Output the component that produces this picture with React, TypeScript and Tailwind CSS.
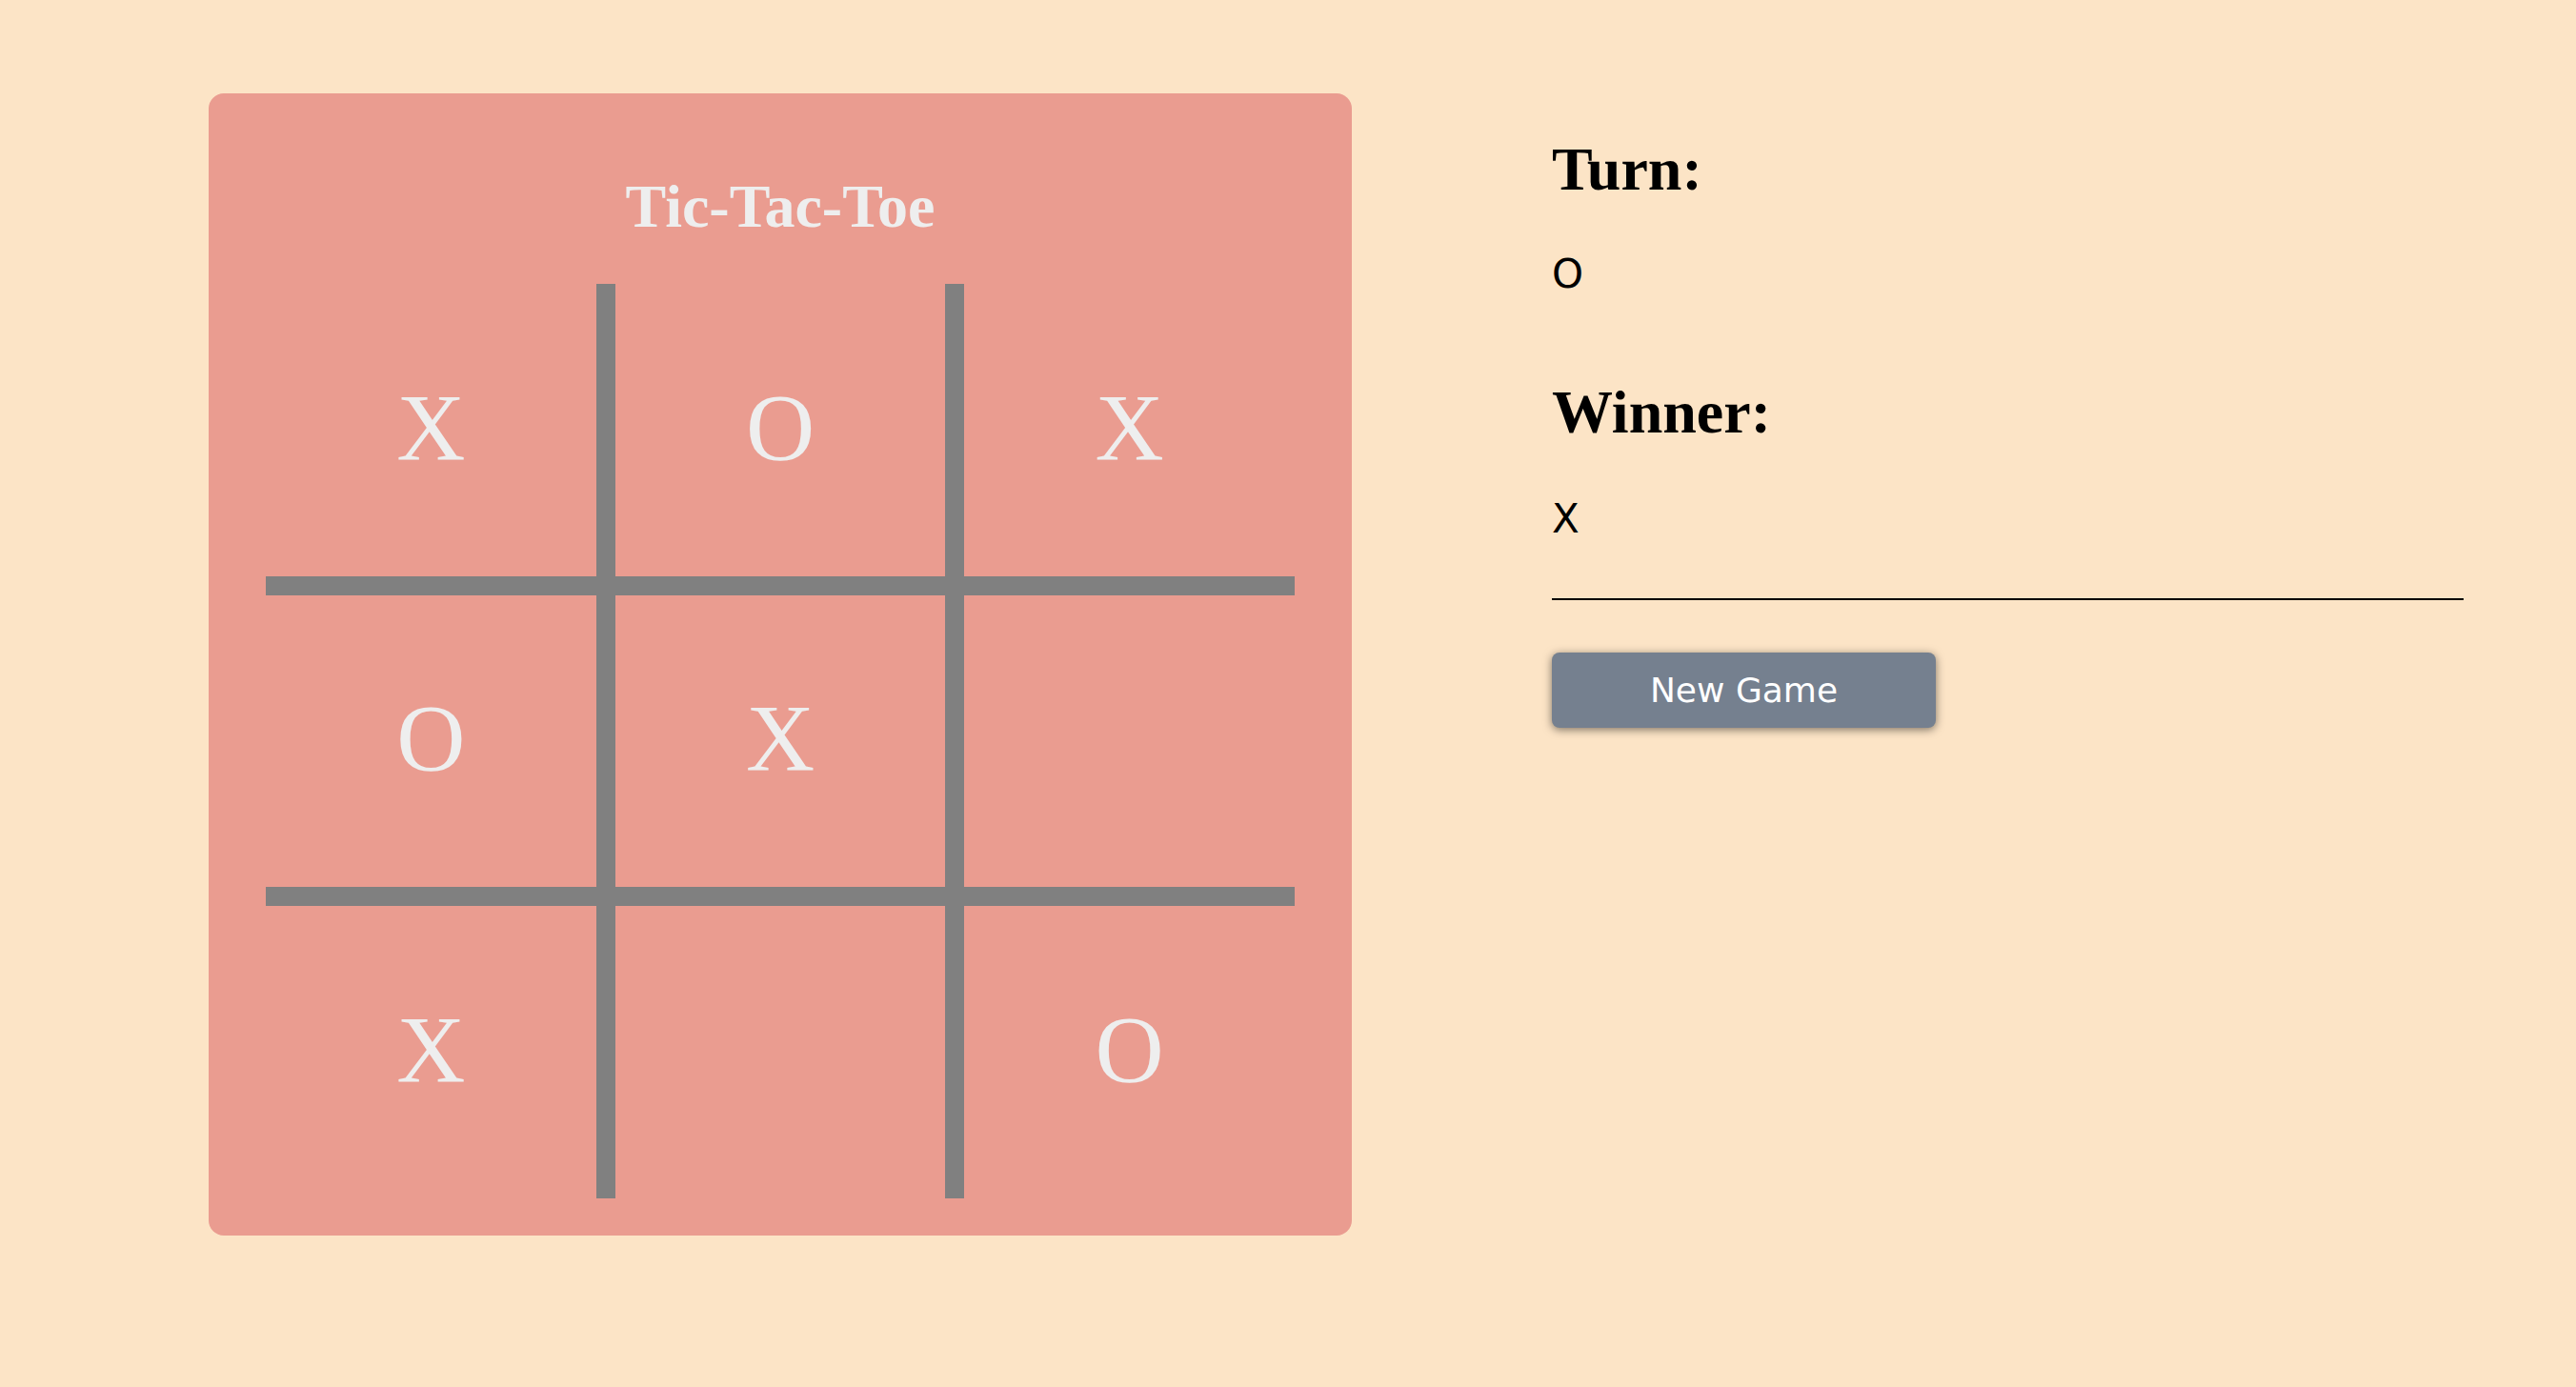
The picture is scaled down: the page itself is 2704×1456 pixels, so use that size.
import React from 'react';

type Mark = 'X' | 'O' | '';

const board: Mark[] = ['X', 'O', 'X', 'O', 'X', '', 'X', '', 'O'];

const Cell: React.FC<{ value: Mark }> = ({ value }) => (
  <div className="bg-[#ea9c90] flex items-center justify-center pb-[5px]">
    <span className="font-['Liberation_Serif',serif] text-[100px] leading-none text-[#eeeeee]">
      {value}
    </span>
  </div>
);

const App: React.FC = () => {
  return (
    <div className="min-h-screen w-full bg-[#fce4c6] flex items-start pt-[98px] pl-[219px]">
      <div className="w-[1200px] h-[1199px] shrink-0 rounded-[16px] bg-[#ea9c90] px-[60px] pt-[87px] flex flex-col">
        <h1 className="text-center font-['Liberation_Serif',serif] font-bold text-[64px] leading-[64px] text-[#eeeeee] mb-[49px]">
          Tic-Tac-Toe
        </h1>
        <div className="grid grid-cols-3 grid-rows-3 gap-[20px] bg-[#808080] w-[1080px] h-[960px]">
          {board.map((value, i) => (
            <Cell key={i} value={value} />
          ))}
        </div>
      </div>

      <div className="ml-[210px] w-[957px] pt-[48px] flex flex-col">
        <h2 className="font-['Liberation_Serif',serif] font-bold text-[64px] leading-[64px] text-black">
          Turn:
        </h2>
        <p className="mt-[57px] font-['DejaVu_Sans',sans-serif] text-[42px] leading-[42px] text-black">
          O
        </p>
        <h2 className="mt-[92px] font-['Liberation_Serif',serif] font-bold text-[64px] leading-[64px] text-black">
          Winner:
        </h2>
        <p className="mt-[59px] font-['DejaVu_Sans',sans-serif] text-[42px] leading-[42px] text-black">
          X
        </p>
        <hr className="mt-[62px] border-0 h-[2px] bg-black w-[957px]" />
        <button
          type="button"
          className="mt-[55px] w-[403px] h-[79px] rounded-[8px] bg-[#75808f] text-white font-['DejaVu_Sans',sans-serif] text-[36px] leading-none flex items-center justify-center shadow-[0_2px_10px_rgba(0,0,0,0.5)]"
        >
          New Game
        </button>
      </div>
    </div>
  );
};

export default App;
